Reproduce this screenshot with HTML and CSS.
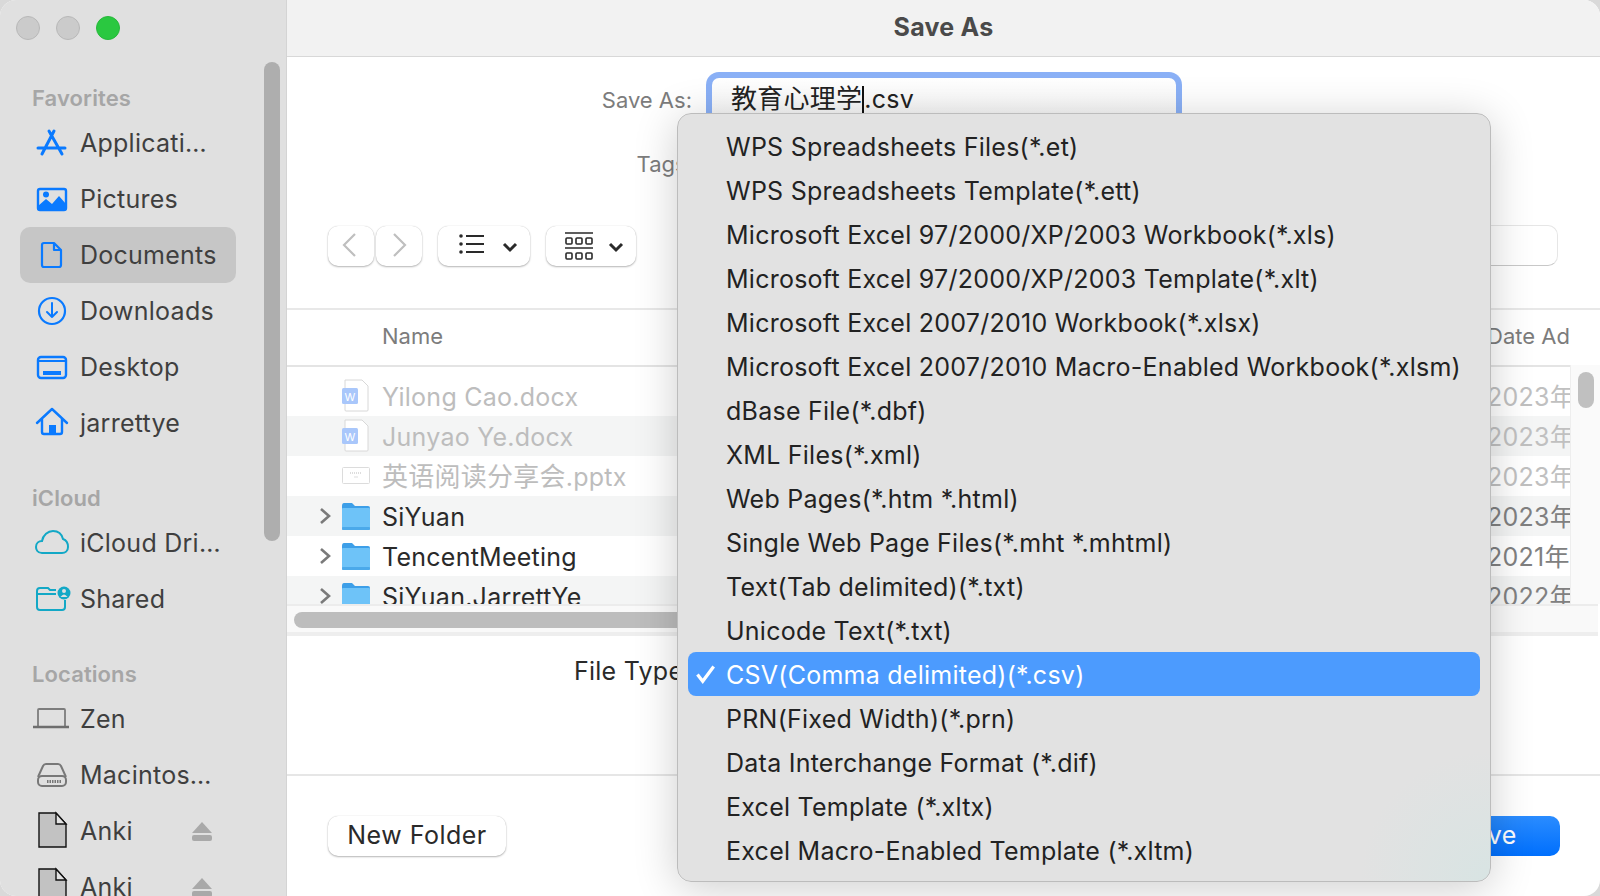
FILE: index.html
```html
<!DOCTYPE html>
<html lang="en">
<head>
<meta charset="utf-8">
<title>Save As</title>
<link rel="stylesheet" href="styles.css">
</head>
<body>
<div class="window">
  <aside class="sidebar">
    <div class="lights"><span class="light"></span><span class="light"></span><span class="light green"></span></div>

    <div class="side-label">Favorites</div>
    <div class="side-row"><svg class="side-icon blue" viewBox="0 0 40 40"><path d="M17 8 30 31M22 8 10 31M6 25H33" fill="none" stroke="currentColor" stroke-width="3" stroke-linecap="round"/></svg><span>Applicati…</span></div>
    <div class="side-row"><svg class="side-icon blue" viewBox="0 0 40 40"><rect x="6" y="10" width="28" height="21" rx="2" fill="none" stroke="currentColor" stroke-width="2.4"/><path d="M6 31V27L14 20 20 25 27 17 34 25V31Z" fill="currentColor"/><circle cx="14" cy="15.500" r="3" fill="currentColor"/></svg><span>Pictures</span></div>
    <div class="side-row selected"><svg class="side-icon blue" viewBox="0 0 40 40"><path d="M12 8H22L29 15V30Q29 32 27 32H12Q10 32 10 30V10Q10 8 12 8ZM22 8V15H29" fill="none" stroke="currentColor" stroke-width="2.200" stroke-linejoin="round"/></svg><span>Documents</span></div>
    <div class="side-row"><svg class="side-icon blue" viewBox="0 0 40 40"><circle cx="20" cy="20" r="13" fill="none" stroke="currentColor" stroke-width="2.200"/><path d="M20 12V26M15 21 20 26 25 21" fill="none" stroke="currentColor" stroke-width="2" stroke-linecap="round" stroke-linejoin="round"/></svg><span>Downloads</span></div>
    <div class="side-row"><svg class="side-icon blue" viewBox="0 0 40 40"><rect x="6" y="10" width="28" height="21" rx="3" fill="none" stroke="currentColor" stroke-width="2.400"/><path d="M6 14H34" stroke="currentColor" stroke-width="2"/><rect x="11" y="24" width="18" height="4" fill="currentColor"/></svg><span>Desktop</span></div>
    <div class="side-row"><svg class="side-icon blue" viewBox="0 0 40 40"><path d="M5 20 20 6 35 20M10 16V29Q10 31 12 31H28Q30 31 30 29V16" fill="none" stroke="currentColor" stroke-width="2.400" stroke-linecap="round" stroke-linejoin="round"/><rect x="17" y="22" width="7" height="9" fill="currentColor"/></svg><span>jarrettye</span></div>

    <div class="side-label spaced">iCloud</div>
    <div class="side-row"><svg class="side-icon teal" viewBox="0 0 40 40"><path d="M10 30C5 30 4 26 4 24 4 20 7 18 10 18 11 12 16 8 21 8 27 8 30 12 31 16 34 17 36 20 36 24 36 28 33 30 30 30Z" fill="none" stroke="currentColor" stroke-width="2"/></svg><span>iCloud Dri…</span></div>
    <div class="side-row"><svg class="side-icon teal" viewBox="0 0 40 40"><path d="M24 11H18L16 9H8Q5 9 5 12V28Q5 31 8 31H30Q33 31 33 28V21M5 15H24" fill="none" stroke="currentColor" stroke-width="2"/><circle cx="32" cy="14" r="6.500" fill="currentColor"/><circle cx="32" cy="12" r="2" fill="#e0e0e0"/><path d="M28.500 18Q32 13 35.500 18Z" fill="#e0e0e0"/></svg><span>Shared</span></div>

    <div class="side-label spaced">Locations</div>
    <div class="side-row"><svg class="side-icon" viewBox="0 0 40 40"><path d="M6 27V11Q6 10 7 10H32Q33 10 33 11V27" fill="none" stroke="#7d7d7d" stroke-width="1.800"/><path d="M1 28H37" stroke="#6e6e6e" stroke-width="2.600"/></svg><span>Zen</span></div>
    <div class="side-row"><svg class="side-icon" viewBox="0 0 40 40"><path d="M6 22 11 11Q12 9 14 9H26Q28 9 29 11L34 22" fill="none" stroke="#787878" stroke-width="2"/><rect x="6" y="21" width="28" height="10" rx="4" fill="none" stroke="#787878" stroke-width="2"/><path d="M15 26.500H29" stroke="#787878" stroke-width="3" stroke-dasharray="1.500 1"/></svg><span>Macintos…</span></div>
    <div class="side-row"><svg class="side-icon" viewBox="0 0 40 40"><path d="M7 2H24L34 13V36H7Z" fill="#c2c2c2" stroke="#111" stroke-width="1.400"/><path d="M24 2V13H34Z" fill="#e2e2e2" stroke="#111" stroke-width="1.400"/></svg><span>Anki</span><svg class="eject" viewBox="0 0 20 20"><path d="M10 1 20 12H0Z"/><rect y="14" width="20" height="6" rx="2"/></svg></div>
    <div class="side-row"><svg class="side-icon" viewBox="0 0 40 40"><path d="M7 2H24L34 13V36H7Z" fill="#c2c2c2" stroke="#111" stroke-width="1.400"/><path d="M24 2V13H34Z" fill="#e2e2e2" stroke="#111" stroke-width="1.400"/></svg><span>Anki</span><svg class="eject" viewBox="0 0 20 20"><path d="M10 1 20 12H0Z"/><rect y="14" width="20" height="6" rx="2"/></svg></div>

    <div class="side-scroll"></div>
  </aside>

  <main class="main">
    <header class="titlebar">Save As</header>

    <section class="form">
      <div class="form-row">
        <label class="form-label">Save As:</label>
        <div class="field"><span class="cjk">教育心理学</span><span class="caret"></span><span>.csv</span></div>
      </div>
      <div class="form-row tags">
        <label class="form-label">Tags:</label>
      </div>
    </section>

    <section class="toolbar">
      <button class="tool nav"><svg viewBox="0 0 46 40"><path d="M27 8 16 19 27 30" fill="none" stroke="#bfbfbf" stroke-width="2.200"/></svg></button>
      <button class="tool nav next"><svg viewBox="0 0 46 40"><path d="M18 8 29 19 18 30" fill="none" stroke="#bfbfbf" stroke-width="2.200"/></svg></button>
      <button class="tool view"><svg viewBox="0 0 92 40"><g fill="#2a2a2a"><circle cx="23" cy="10" r="1.800"/><circle cx="23" cy="18" r="1.800"/><circle cx="23" cy="26" r="1.800"/></g><path d="M28 10H46M28 18H46M28 26H46" stroke="#2a2a2a" stroke-width="1.800"/><path d="M66 18 72 24 78 18" fill="none" stroke="#2a2a2a" stroke-width="3"/></svg></button>
      <button class="tool view grid"><svg viewBox="0 0 90 40"><path d="M19 7H47M19 22H47" stroke="#2a2a2a" stroke-width="1.600"/><g fill="none" stroke="#2a2a2a" stroke-width="1.600"><rect x="20" y="12" width="6" height="6" rx="1"/><rect x="30" y="12" width="6" height="6" rx="1"/><rect x="40" y="12" width="6" height="6" rx="1"/><rect x="20" y="27" width="6" height="6" rx="1"/><rect x="30" y="27" width="6" height="6" rx="1"/><rect x="40" y="27" width="6" height="6" rx="1"/></g><path d="M64 18 70 24 76 18" fill="none" stroke="#2a2a2a" stroke-width="3"/></svg></button>
      <div class="search"></div>
    </section>

    <section class="browser">
      <div class="col-head"><span class="col-name">Name</span><span class="col-date">Date Added</span></div>
      <div class="list-wrap">
        <div class="list">
          <div class="file dim"><span class="disclosure"></span><svg class="file-icon" viewBox="0 0 32 40"><path d="M5 4H22L28 10V34Q28 35 27 35H6Q5 35 5 34Z" fill="#fff" stroke="#d8d8d8"/><rect x="2" y="12" width="16" height="16" rx="1.500" fill="#a9c7fb"/><text x="10" y="24.500" class="w-mark">W</text></svg><span class="file-name">Yilong Cao.docx</span><span class="file-date">2023年3月</span></div>
          <div class="file dim alt"><span class="disclosure"></span><svg class="file-icon" viewBox="0 0 32 40"><path d="M5 4H22L28 10V34Q28 35 27 35H6Q5 35 5 34Z" fill="#fff" stroke="#d8d8d8"/><rect x="2" y="12" width="16" height="16" rx="1.500" fill="#a9c7fb"/><text x="10" y="24.500" class="w-mark">W</text></svg><span class="file-name">Junyao Ye.docx</span><span class="file-date">2023年3月</span></div>
          <div class="file dim"><span class="disclosure"></span><svg class="file-icon" viewBox="0 0 32 40"><rect x="2.500" y="11.500" width="27" height="16" rx="1" fill="#fff" stroke="#dcdcdc"/><path d="M10 17H22" stroke="#bbb" stroke-dasharray="1 1"/><path d="M14 21H18" stroke="#ddd"/></svg><span class="file-name"><span class="cjk">英语阅读分享会</span>.pptx</span><span class="file-date">2023年3月</span></div>
          <div class="file alt"><svg class="disclosure" viewBox="0 0 12 40"><path d="M2 13 10 20 2 27" fill="none" stroke="#7a7a7a" stroke-width="2.600"/></svg><svg class="file-icon" viewBox="0 0 32 40"><path d="M2 10Q2 7 4 7H12L15 10H28Q30 10 30 12V32Q30 34 28 34H4Q2 34 2 32Z" fill="#3d9fe8"/><rect x="2" y="12" width="28" height="21" rx="1" fill="#6ec3f8"/><rect x="2" y="31" width="28" height="3" rx="1" fill="#4ba9ea"/></svg><span class="file-name">SiYuan</span><span class="file-date">2023年3月</span></div>
          <div class="file"><svg class="disclosure" viewBox="0 0 12 40"><path d="M2 13 10 20 2 27" fill="none" stroke="#7a7a7a" stroke-width="2.600"/></svg><svg class="file-icon" viewBox="0 0 32 40"><path d="M2 10Q2 7 4 7H12L15 10H28Q30 10 30 12V32Q30 34 28 34H4Q2 34 2 32Z" fill="#3d9fe8"/><rect x="2" y="12" width="28" height="21" rx="1" fill="#6ec3f8"/><rect x="2" y="31" width="28" height="3" rx="1" fill="#4ba9ea"/></svg><span class="file-name">TencentMeeting</span><span class="file-date">2021年3月</span></div>
          <div class="file alt"><svg class="disclosure" viewBox="0 0 12 40"><path d="M2 13 10 20 2 27" fill="none" stroke="#7a7a7a" stroke-width="2.600"/></svg><svg class="file-icon" viewBox="0 0 32 40"><path d="M2 10Q2 7 4 7H12L15 10H28Q30 10 30 12V32Q30 34 28 34H4Q2 34 2 32Z" fill="#3d9fe8"/><rect x="2" y="12" width="28" height="21" rx="1" fill="#6ec3f8"/><rect x="2" y="31" width="28" height="3" rx="1" fill="#4ba9ea"/></svg><span class="file-name">SiYuan.JarrettYe</span><span class="file-date">2022年3月</span></div>
        </div>
        <div class="v-track"><div class="v-thumb"></div></div>
      </div>
      <div class="h-track"><div class="h-thumb"></div></div>
    </section>

    <section class="options"><span class="options-label">File Type</span></section>

    <footer class="footer">
      <button class="btn">New Folder</button>
      <button class="btn primary">Save</button>
    </footer>

    <div class="menu">
      <div class="menu-item"><span class="check"></span>WPS Spreadsheets Files(*.et)</div>
      <div class="menu-item"><span class="check"></span>WPS Spreadsheets Template(*.ett)</div>
      <div class="menu-item"><span class="check"></span>Microsoft Excel 97/2000/XP/2003 Workbook(*.xls)</div>
      <div class="menu-item"><span class="check"></span>Microsoft Excel 97/2000/XP/2003 Template(*.xlt)</div>
      <div class="menu-item"><span class="check"></span>Microsoft Excel 2007/2010 Workbook(*.xlsx)</div>
      <div class="menu-item"><span class="check"></span>Microsoft Excel 2007/2010 Macro-Enabled Workbook(*.xlsm)</div>
      <div class="menu-item"><span class="check"></span>dBase File(*.dbf)</div>
      <div class="menu-item"><span class="check"></span>XML Files(*.xml)</div>
      <div class="menu-item"><span class="check"></span>Web Pages(*.htm *.html)</div>
      <div class="menu-item"><span class="check"></span>Single Web Page Files(*.mht *.mhtml)</div>
      <div class="menu-item"><span class="check"></span>Text(Tab delimited)(*.txt)</div>
      <div class="menu-item"><span class="check"></span>Unicode Text(*.txt)</div>
      <div class="menu-item active"><svg class="check" viewBox="0 0 38 44"><path d="M9 21.500 14.500 28.500 26 13" fill="none" stroke="#fff" stroke-width="3.400"/></svg>CSV(Comma delimited)(*.csv)</div>
      <div class="menu-item"><span class="check"></span>PRN(Fixed Width)(*.prn)</div>
      <div class="menu-item"><span class="check"></span>Data Interchange Format (*.dif)</div>
      <div class="menu-item"><span class="check"></span>Excel Template (*.xltx)</div>
      <div class="menu-item"><span class="check"></span>Excel Macro-Enabled Template (*.xltm)</div>
    </div>
  </main>
</div>
</body>
</html>
```
FILE: styles.css
```css
* { box-sizing: border-box; }

html, body {
  margin: 0;
  height: 100%;
  overflow: hidden;
  background: #d9d9d9;
}

body {
  font-family: Inter, "Noto Sans CJK SC", sans-serif;
  font-size: 25px;
  letter-spacing: .25px;
  color: #2a2a2a;
}

.cjk { font-size: 26px; }

.window {
  display: flex;
  width: 1600px;
  height: 896px;
  border-radius: 16px;
  overflow: hidden;
  background: #fff;
}

/* Sidebar */
.sidebar {
  position: relative;
  flex: 0 0 287px;
  padding-top: 16px;
  background: #e0e0e0;
  border-right: 1px solid #d4d4d4;
  color: #3f3f3f;
  overflow: hidden;
}

.lights {
  display: flex;
  gap: 16px;
  height: 24px;
  padding-left: 16px;
}

.light {
  width: 24px;
  height: 24px;
  border-radius: 50%;
  background: #cbcbcb;
  border: 1px solid #b8b8b8;
}

.light.green {
  background: #2ac840;
  border-color: #27b83b;
}

.side-label {
  height: 28px;
  margin: 44px 0 3px 32px;
  font-size: 22px;
  font-weight: 600;
  line-height: 28px;
  letter-spacing: .1px;
  color: #a6a6a6;
}

.side-label.spaced { margin-top: 33px; }

.side-row {
  display: flex;
  align-items: center;
  width: 216px;
  height: 56px;
  margin-left: 20px;
  padding-left: 12px;
  border-radius: 10px;
  white-space: nowrap;
}

.side-row.selected { background: #c6c6c6; }

.side-icon {
  flex: 0 0 40px;
  width: 40px;
  height: 40px;
  margin-right: 8px;
}

.blue { color: #0a7aff; }
.teal { color: #13a8c6; }

.eject {
  width: 20px;
  height: 20px;
  margin-left: auto;
  margin-right: 24px;
  fill: #a9a9a9;
}

.side-scroll {
  position: absolute;
  top: 62px;
  left: 264px;
  width: 16px;
  height: 479px;
  border-radius: 8px;
  background: #aeaeae;
}

/* Main column */
.main {
  position: relative;
  display: flex;
  flex: 1;
  flex-direction: column;
  min-width: 0;
}

.titlebar {
  flex: 0 0 57px;
  background: #f2f2f2;
  border-bottom: 1px solid #d8d8d8;
  font-weight: 700;
  line-height: 55px;
  text-align: center;
  letter-spacing: .25px;
  color: #4a4a4a;
}

.form { padding-top: 15px; }

.form-row {
  display: flex;
  align-items: center;
  height: 48px;
}

.form-row.tags { margin-top: 21px; }

.form-label {
  flex: 0 0 405px;
  padding-top: 8px;
  text-align: right;
  font-size: 22px;
  letter-spacing: 0;
  color: #7c7c7c;
}

.tags .form-label {
  flex-basis: 406px;
  padding: 0 0 2px;
}

.field {
  display: flex;
  align-items: baseline;
  width: 476px;
  height: 48px;
  margin-left: 14px;
  padding: 6px 0 0 19px;
  border: 6px solid #8ab0f6;
  border-bottom: 0;
  border-radius: 13px 13px 0 0;
  background: linear-gradient(#fff, #f5f5f5);
  color: #222;
  line-height: 30px;
}

.caret {
  align-self: center;
  width: 2px;
  height: 33px;
  background: #111;
}

.toolbar {
  display: flex;
  height: 40px;
  margin: 37px 0 42px;
  padding: 0 42px 0 41px;
}

.tool {
  padding: 0;
  height: 40px;
  background: #fff;
  border: 0;
  border-radius: 10px;
  box-shadow: 0 1px 2px rgba(0, 0, 0, .28), 0 0 1px rgba(0, 0, 0, .2);
}

.tool svg {
  display: block;
  width: 100%;
  height: 100%;
}

.nav { width: 46px; }
.nav.next { margin-left: 2px; }

.view {
  width: 92px;
  margin-left: 16px;
}

.view.grid { width: 90px; }

.search {
  width: 400px;
  height: 41px;
  margin: -1px 0 0 auto;
  border-radius: 10px;
  border: 1px solid #e6e6e6;
  border-bottom-color: #c8c8c8;
}

/* File browser */
.browser {
  display: flex;
  flex-direction: column;
  height: 328px;
  border-top: 2px solid #e8e8e8;
}

.col-head {
  display: flex;
  flex: 0 0 55px;
  align-items: center;
  justify-content: space-between;
  padding: 0 30px 4px 95px;
  font-size: 22px;
  letter-spacing: 0;
  color: #7c7c7c;
  white-space: nowrap;
  overflow: hidden;
}

.col-date {
  width: 83px;
  overflow: hidden;
}

.list-wrap {
  display: flex;
  flex: 0 0 239px;
  min-height: 0;
}

.list {
  flex: 1;
  min-width: 0;
  padding-top: 9px;
  border-top: 2px solid #e4e4e4;
  overflow: hidden;
}

.file {
  display: flex;
  align-items: center;
  height: 40px;
  padding-left: 32px;
  white-space: nowrap;
  color: #2a2a2a;
}

.file.alt { background: #f4f5f5; }
.file.dim { color: #bdbdbd; }

.disclosure {
  flex: 0 0 12px;
  width: 12px;
  height: 40px;
  margin-right: 9px;
}

.file-icon {
  flex: 0 0 32px;
  width: 32px;
  height: 40px;
  margin-right: 10px;
}

.w-mark {
  font-family: Inter, sans-serif;
  font-size: 11px;
  fill: #fff;
  text-anchor: middle;
}

.file-name {
  flex: 1;
  padding-top: 2px;
  line-height: 30px;
}

.file-date {
  flex: 0 0 83px;
  padding-top: 2px;
  line-height: 30px;
  overflow: hidden;
  color: #808080;
}

.file.dim .file-date { color: #c0c0c0; }

.v-track {
  flex: 0 0 30px;
  padding: 7px 0 0 7px;
  background: #fafafa;
  border-left: 1px solid #eee;
}

.v-thumb {
  width: 16px;
  height: 36px;
  border-radius: 8px;
  background: #c0c0c0;
}

.h-track {
  flex: 0 0 32px;
  padding: 6px 200px 0 7px;
  margin-right: 2px;
  background: #f9f9f9;
  border-top: 2px solid #ececec;
  border-bottom: 4px solid #eeeeee;
}

.h-thumb {
  height: 16px;
  border-radius: 8px;
  background: #bdbdbd;
}

.options {
  flex: 0 0 138px;
  padding: 21px 0 0 287px;
  line-height: 28px;
  white-space: nowrap;
}

.footer {
  display: flex;
  flex: 1;
  justify-content: space-between;
  padding: 40px 40px 0 41px;
  border-top: 2px solid #e6e6e6;
}

.btn {
  width: 178px;
  height: 40px;
  padding: 0 0 3px;
  background: #fff;
  border: 0;
  border-radius: 10px;
  box-shadow: 0 1px 2px rgba(0, 0, 0, .28), 0 0 1px rgba(0, 0, 0, .2);
  font: inherit;
  letter-spacing: .5px;
  color: #2a2a2a;
}

.btn.primary {
  width: 146px;
  background: linear-gradient(#2a8cff, #006ffd);
  box-shadow: none;
  color: #fff;
}

/* Popup menu, floating over the sheet */
.menu {
  position: absolute;
  top: 113px;
  left: 390px;
  width: 814px;
  height: 769px;
  padding-top: 10px;
  background: radial-gradient(circle at 100% 100%, #d8e4e3, #e2e2e2 130px);
  border: 1px solid #bcbcbc;
  border-radius: 14px;
  box-shadow: 0 6px 44px rgba(0, 0, 0, .2);
  color: #222;
}

.menu-item {
  display: flex;
  align-items: center;
  height: 44px;
  margin: 0 10px;
  padding-top: 2px;
  border-radius: 8px;
  white-space: nowrap;
}

.menu-item.active {
  background: #4c9bfe;
  color: #fff;
}

.check {
  flex: 0 0 38px;
  width: 38px;
  height: 42px;
}
```
